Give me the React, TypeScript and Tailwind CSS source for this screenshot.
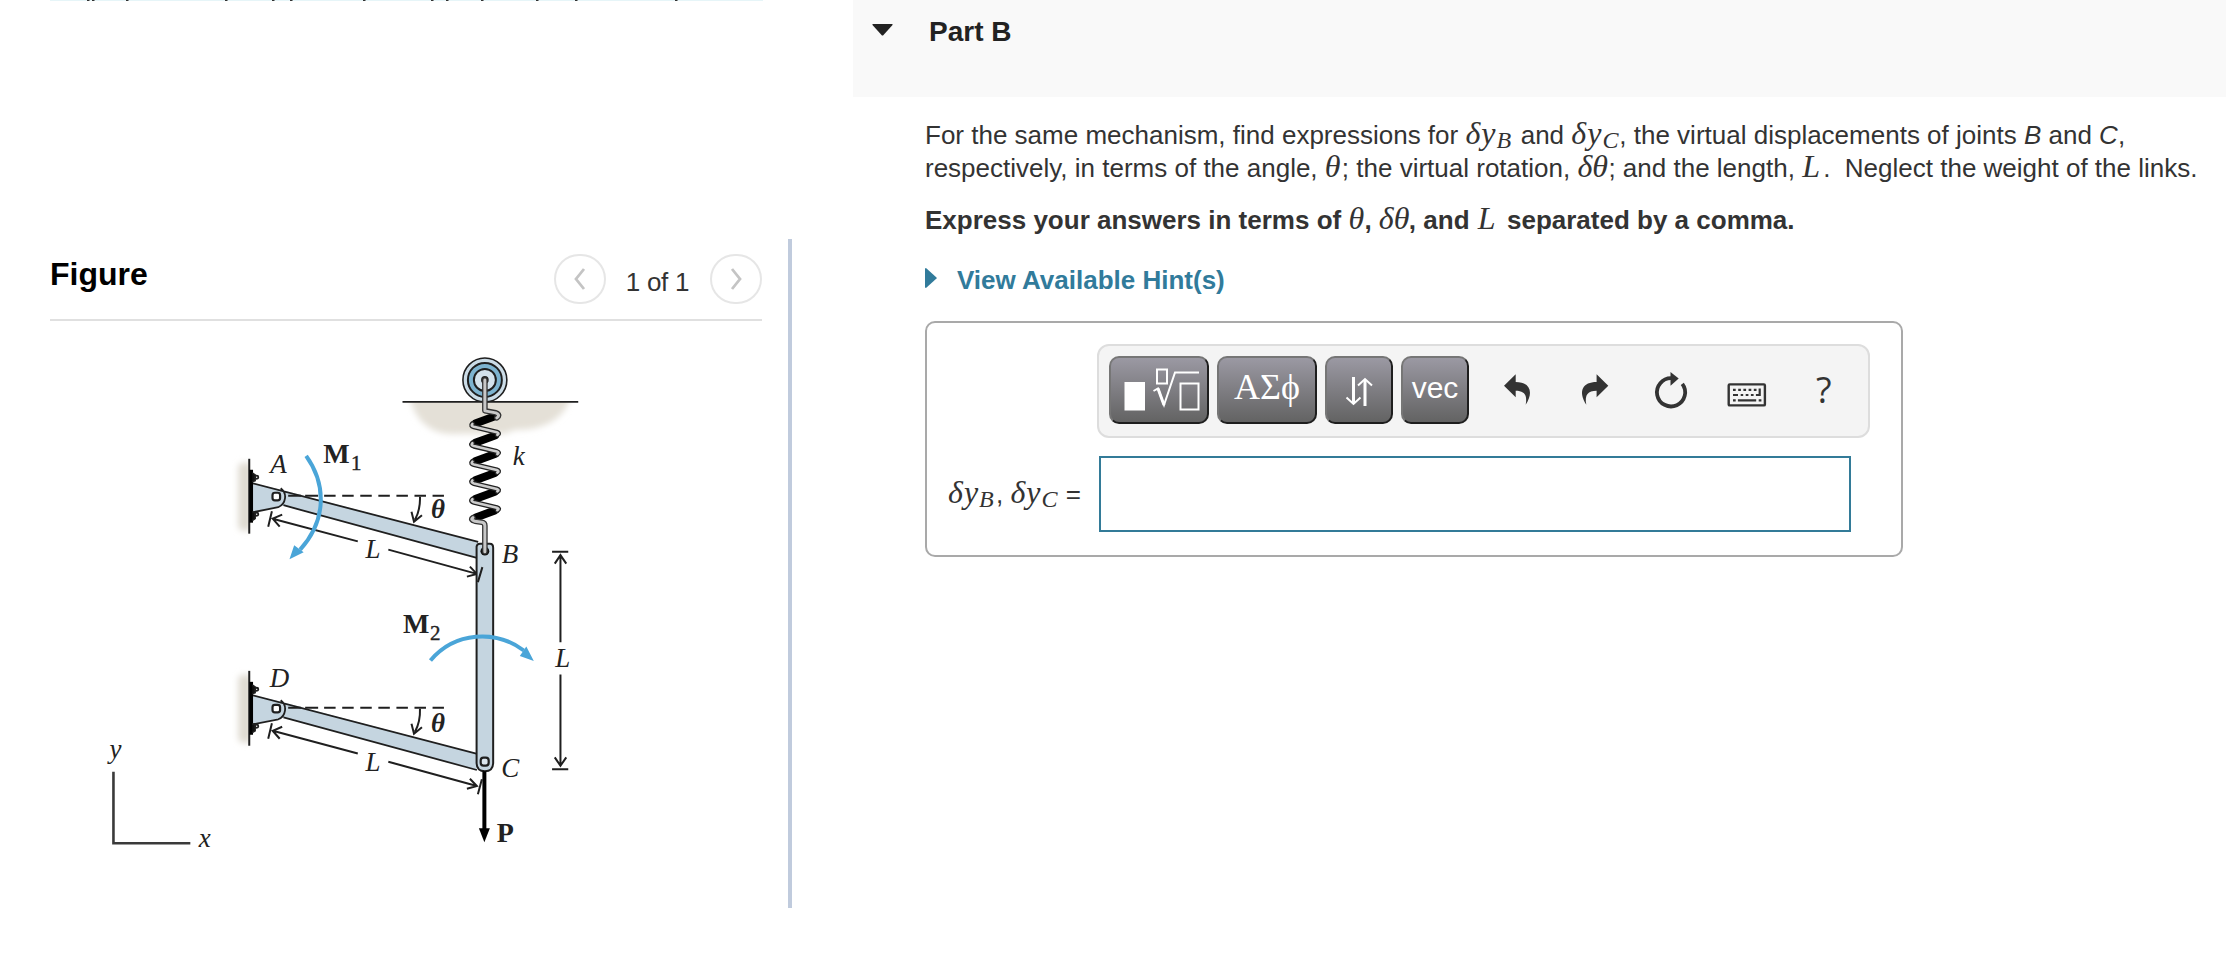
import React from 'react';

const ink = '#1f1f1f';
const steel = '#c5d5e0';
const blue = '#4aa5d8';

// x positions of the descenders left visible from the scrolled text above
const descenders = [87, 92, 126, 225, 272, 290, 363, 431, 446, 481, 536, 575, 675];

const coils = [415, 434.3, 452.8, 471.7, 490.5, 509.2];

const strand = (y: number) => `M472.5 ${y + 9} Q470.5 ${y + 11} 474 ${y + 12} L497 ${y + 17.5} Q500 ${y + 18.5} 497.5 ${y + 20}`;

const Link: React.FC = () => (
  <g stroke={ink} fill="none" strokeWidth="1.8">
    <rect x="238" y="463" width="14" height="68" rx="5" fill="#e0dcd2" stroke="none" filter="url(#soft)" />
    <rect x="250" y="450" width="14" height="95" fill="#fff" stroke="none" />
    <path d="M251.7 483.3 L283 490.5 L478.3 542.3 L476.7 557.7 L283.3 506 L276 507 L251.7 512.7 Z" fill={steel} stroke="none" />
    <path d="M251.7 483.3 L478.3 542.3 M283.3 505.500 L477 558.3 M251.7 512.7 L278 507.5 A11 11 0 0 0 280.5 488.5" />
    <path d="M249 459 V534" strokeWidth="2" />
    <path d="M251 470 V523" strokeWidth="3.6" stroke="#000" />
    <path d="M252 473 l3 2 v6 l-3 1 M252 512 l3 1 v6 l-3 2" fill="#111" strokeWidth="1.4" />
    <circle cx="256.500" cy="477.5" r="1.6" />
    <circle cx="256.500" cy="514.5" r="1.6" />
    <rect x="272.3" y="493" width="7.6" height="7.6" rx="2.4" fill="#fff" strokeWidth="2.2" />
    <path d="M288 496 H318" strokeWidth="2" strokeDasharray="13 4" />
    <path d="M324 496 H444" strokeWidth="2" strokeDasharray="11.5 6.6" />
    <path d="M420 497 Q420.5 510 415 520 M411.5 512 L414 522 L422 515.5" strokeWidth="2" />
    <path d="M271.7 511.5 L268 527 M272.5 519 L357.7 541.7 M282 515 L272.5 519 L279.5 527" strokeWidth="2" />
    <path d="M388.3 550 L477 574.3 M470 567 L477 574.3 L467 577" strokeWidth="2" />
  </g>
);

const Mechanism: React.FC = () => (
  <svg className="block" width="712" height="588" viewBox="50 321 712 588" fontFamily="'Liberation Serif', serif" fontSize="27">
    <defs>
      <filter id="soft" x="-40%" y="-40%" width="180%" height="180%">
        <feGaussianBlur stdDeviation="3" />
      </filter>
      <clipPath id="below">
        <rect x="380" y="402" width="220" height="60" />
      </clipPath>
    </defs>

    {/* ceiling and pulley */}
    <g clipPath="url(#below)">
      <path d="M409 395 H572 Q562 430 515 430 L505 434 H458 Q418 436 409 395 Z" fill="#e4e0d7" filter="url(#soft)" />
    </g>
    <circle cx="485" cy="380" r="22" fill="#cbdce7" stroke={ink} strokeWidth="1.6" />
    <circle cx="485" cy="380" r="17" fill="#7db3cf" stroke={ink} strokeWidth="2" />
    <circle cx="485" cy="380" r="11" fill="#d3e2ec" stroke={ink} strokeWidth="2" />
    <path d="M402.5 402 H578.5" stroke={ink} strokeWidth="2" />
    <circle cx="485" cy="380" r="3.8" fill="#222" />

    <Link />
    <g transform="translate(0 212.4)">
      <Link />
    </g>

    {/* vertical member */}
    <path d="M476.7 547 Q477 544 480 544 H490 Q493.3 544 493.3 548 V764 Q493 772 485 772 Q477 772 476.7 764 Z" fill={steel} stroke={ink} strokeWidth="2" />
    <rect x="480.8" y="758.3" width="8" height="8" rx="2.8" fill="#dce6ee" stroke={ink} strokeWidth="2.2" />
    <circle cx="485" cy="551.5" r="4.4" fill="#111" />
    <path d="M482.5 567.5 L478 582.5 M482 780 L478 795" stroke={ink} strokeWidth="2" />

    {/* spring */}
    <g fill="none" strokeLinecap="round" strokeLinejoin="round">
      {coils.map((y) => (
        <path key={y} d={`M495 ${y + 1.5} L476 ${y + 8.5}`} stroke="#000" strokeWidth="8" />
      ))}
      {coils.slice(0, 5).map((y) => (
        <g key={y}>
          <path d={strand(y)} stroke="#222" strokeWidth="5.2" />
          <path d={strand(y)} stroke="#cdcdcd" strokeWidth="2.6" />
        </g>
      ))}
      <path d="M485 380 V411 L496 413 Q501 415 497 418 M473 518 Q470 520 475 521.5 L482 522.5 Q485 523 485 526 V552" stroke="#333" strokeWidth="5.6" />
      <path d="M485 380 V411 L496 413 Q501 415 497 418 M473 518 Q470 520 475 521.5 L482 522.5 Q485 523 485 526 V552" stroke="#c8c8c8" strokeWidth="3" />
    </g>

    {/* couples */}
    <g fill="none" stroke={blue} strokeWidth="4">
      <path d="M306 456 C326 484 327 520 300 550" />
      <path d="M430.5 661 C455 632 496 630 524 651" />
    </g>
    <path d="M289.3 559.5 L294 545.5 L303.5 552.5 Z M534 661.5 L520 656.5 L526.5 647 Z" fill={blue} />

    {/* load and height dimension */}
    <path d="M484.5 772 V832" stroke="#000" strokeWidth="4" />
    <path d="M479 829 H490 L484.5 843 Z" fill="#000" />
    <path
      d="M552.3 552 H568.5 M552.3 770 H568.5 M560.7 556 V642.7 M560.7 675 V766.5 M555 564 L560.7 555.5 L566.5 564 M555 758 L560.7 766.5 L566.5 758"
      fill="none"
      stroke={ink}
      strokeWidth="2"
    />
    <path d="M113 772.5 V844 H190" fill="none" stroke="#3a3a3a" strokeWidth="2.6" />

    <g fill="#222" fontStyle="italic">
      <text x="270" y="473">A</text>
      <text x="513" y="465">k</text>
      <text x="431" y="518" fontWeight="bold">θ</text>
      <text x="365.500" y="558">L</text>
      <text x="502" y="563.500">B</text>
      <text x="555.500" y="667.500">L</text>
      <text x="269.5" y="688">D</text>
      <text x="431" y="733" fontWeight="bold">θ</text>
      <text x="365.500" y="771.500">L</text>
      <text x="501.500" y="777.500">C</text>
      <text x="109" y="759">y</text>
      <text x="198.5" y="848">x</text>
    </g>
    <g fill="#222" fontWeight="bold" fontSize="28">
      <text x="323" y="463">M</text>
      <text x="403" y="633">M</text>
      <text x="497" y="843">P</text>
    </g>
    <g fill="#222" stroke="#222" strokeWidth="0.4" fontSize="21">
      <text x="351" y="470.5">1</text>
      <text x="430" y="640.5">2</text>
    </g>
  </svg>
);

const Chevron: React.FC<{ d: string }> = ({ d }) => (
  <button className="flex h-[50px] w-[52px] items-center justify-center rounded-full border-2 border-[#e6e6e6]">
    <svg width="14" height="24" viewBox="0 0 14 24" fill="none" stroke="#c4c4c4" strokeWidth="2.8">
      <path d={d} />
    </svg>
  </button>
);

const Var: React.FC<{ children: React.ReactNode; className: string }> = ({ children, className }) => (
  <span className={`inline-block whitespace-nowrap font-['Liberation_Serif',serif] text-[32px] leading-none font-normal italic ${className}`}>
    {children}
  </span>
);

const Dy: React.FC<{ sub: string }> = ({ sub }) => (
  <>
    <span className="tracking-[1px]">δy</span>
    <span className="relative top-1 text-[24px]">{sub}</span>
  </>
);

const keyClass =
  'flex h-[68px] items-center justify-center rounded-[10px] border-2 border-t-[#767676] border-l-[#767676] border-r-[#1e1e1e] border-b-[#1e1e1e] bg-linear-to-b from-[#9b99a3] to-[#636363] text-white';

const Toolbar: React.FC = () => (
  <div className="flex h-[94px] w-[773px] rounded-xl border-2 border-[#dddddd] bg-[#f4f4f4] pt-2.5 pl-2.5 text-[#333]">
    <div className="flex gap-2">
      <button className={`${keyClass} w-[100px]`}>
        <svg width="96" height="64" viewBox="1111 358 96 64" fill="none" stroke="#fff" strokeWidth="2">
          <rect x="1124.5" y="382" width="20.5" height="28.5" fill="#fff" stroke="none" />
          <rect x="1157" y="369.5" width="10" height="14" />
          <path d="M1153.5 391 L1158 388.5 L1164 405 L1175 372.5 H1199" />
          <path d="M1158 388.5 L1164 405" strokeWidth="3" />
          <rect x="1180.5" y="383.5" width="18" height="26" />
        </svg>
      </button>
      <button className={`${keyClass} w-[100px] pb-1.5 font-['Liberation_Serif',serif] text-[36px]`}>ΑΣϕ</button>
      <button className={`${keyClass} w-[68px]`}>
        <svg width="64" height="64" viewBox="1327 358 64 64" fill="none" stroke="#fff" strokeWidth="3">
          <path d="M1353.5 377 V403 M1365 406 V380" />
          <path d="M1346.5 397.5 L1353.5 404 L1360.5 397.5 M1358 385.5 L1365 379 L1372 385.5" strokeWidth="2" />
        </svg>
      </button>
      <button className={`${keyClass} w-[68px] pb-1.5 text-[30px]`}>vec</button>
    </div>
    <svg width="386" height="68" viewBox="1469 356 386 68" fill="#333">
      <path d="M1504 385.7 L1515.7 374.3 V382 C1529 382 1534.5 391 1525.7 404.7 C1527.5 394.500 1524 390.7 1515.7 390.7 V397.3 Z" />
      <path d="M1608.3 385.7 L1596.6 374.3 V382 C1583 382 1577.5 391 1586.3 404.7 C1584.500 394.500 1588 390.7 1596.6 390.7 V397.3 Z" />
      <path d="M1671.5 378.2 A14.1 14.1 0 1 0 1682.3 383.8" fill="none" stroke="#333" strokeWidth="3.8" />
      <path d="M1670.5 372 L1678.7 378.5 L1670.5 385.7 Z" />
      <rect x="1728.7" y="384.4" width="36.2" height="21" rx="1" fill="none" stroke="#333" strokeWidth="2.4" />
      <path
        d="M1733 389.8 h2.700 m2.500 0 h2.700 m2.500 0 h2.700 m2.500 0 h2.700 m2.500 0 h2.700 M1733 395 h5 m2.700 0 h2.500 m2.500 0 h2.700 m2.500 0 h2.700 m2.300 0 h3.800 V388.6 M1733 400.3 h2.700 m2.200 0 h18.300 m2.500 0 h2.700"
        fill="none"
        stroke="#333"
        strokeWidth="2.2"
      />
      <text x="1816" y="402.500" fontFamily="'Open Sans', sans-serif" fontSize="36">?</text>
    </svg>
  </div>
);

export default function App() {
  return (
    <div className="flex h-[962px] w-[2226px] overflow-hidden bg-white font-['Liberation_Sans',Arial,sans-serif] text-[26px] text-[#333]">
      <aside className="flex h-[908px] w-[792px] justify-between pl-[50px]">
        <div className="flex w-[713px] flex-col">
          <svg className="block h-px w-full bg-[#e6f5f8]" viewBox="50 0 713 1">
            {descenders.map((x) => (
              <rect key={x} x={x} y="0" width="2.5" height="1" fill="#333" />
            ))}
          </svg>
          <header className="mt-[238px] flex h-[82px] w-[712px] items-start justify-between border-b-2 border-[#e0e0e0] pt-[15px]">
            <h2 className="pt-0.5 text-[32px] leading-[36px] font-bold text-black">Figure</h2>
            <nav className="flex">
              <Chevron d="M11 2 L3 12 L11 22" />
              <span className="w-[104px] pt-[13px] pr-px text-center leading-[30px] tracking-[-0.3px]">1 of 1</span>
              <Chevron d="M3 2 L11 12 L3 22" />
            </nav>
          </header>
          <Mechanism />
        </div>
        <div className="mt-[239px] w-1 bg-[#c0cbdd]" />
      </aside>

      <main className="ml-[61px] flex w-[1373px] flex-col">
        <header className="flex h-[97px] items-start bg-[#f9f9f9] pt-[15px] pl-[19px]">
          <svg className="mt-[9px]" width="21" height="12" viewBox="0 0 21 12" fill="#222">
            <path d="M1 0 H20 Q21 0 20.500 1 L11.500 11 Q10.500 12 9.500 11 L0.500 1 Q0 0 1 0" />
          </svg>
          <h1 className="pt-px pl-[36px] text-[28px] leading-[32px] font-bold text-[#222]">Part B</h1>
        </header>

        <section className="flex flex-col pl-[72px]">
          <div className="mt-5 leading-[33px] whitespace-pre">
            <p className="h-[33px]">
              For the same mechanism, find expressions for <Var className="w-[48px]"><Dy sub="B" /></Var> and{' '}
              <Var className="w-[48px]"><Dy sub="C" /></Var>, the virtual displacements of joints <i>B</i> and <i>C</i>,
            </p>
            <p className="h-[33px]">
              respectively, in terms of the angle, <Var className="w-[17px]">θ</Var>; the virtual rotation,{' '}
              <Var className="w-[31px]">δθ</Var>; and the length, <Var className="w-[21px]">L</Var>.{'  '}Neglect the weight of the links.
            </p>
          </div>
          <p className="mt-[19px] h-[33px] leading-[33px] font-bold whitespace-pre">
            Express your answers in terms of <Var className="w-[16px]">θ</Var>, <Var className="w-[30px]">δθ</Var>, and{' '}
            <Var className="w-[23px] pl-px">L</Var> separated by a comma.
          </p>
          <a className="mt-[29px] flex h-[33px] leading-[33px] font-bold text-[#317b9b]">
            <svg className="mt-1 mr-5" width="12" height="20" viewBox="0 0 12 20" fill="#317b9b">
              <path d="M0 1 Q0 0 1 0 L11.500 9.500 Q12 10 11.500 10.500 L1 20 Q0 20 0 19 Z" />
            </svg>
            View Available Hint(s)
          </a>

          <div className="mt-6 flex h-[236px] w-[978px] flex-col rounded-[10px] border-2 border-[#a9a9a9]">
            <div className="mt-[21px] ml-[170px]">
              <Toolbar />
            </div>
            <div className="mt-[18px] flex items-center">
              <label className="w-[172px] pl-[21px] leading-[40px] whitespace-pre">
                <Var className="w-[48px]"><Dy sub="B" /></Var>, <Var className="w-[48px]"><Dy sub="C" /></Var> =
              </label>
              <input className="h-[76px] w-[752px] border-2 border-[#337b98] bg-white" />
            </div>
          </div>
        </section>
      </main>
    </div>
  );
}
